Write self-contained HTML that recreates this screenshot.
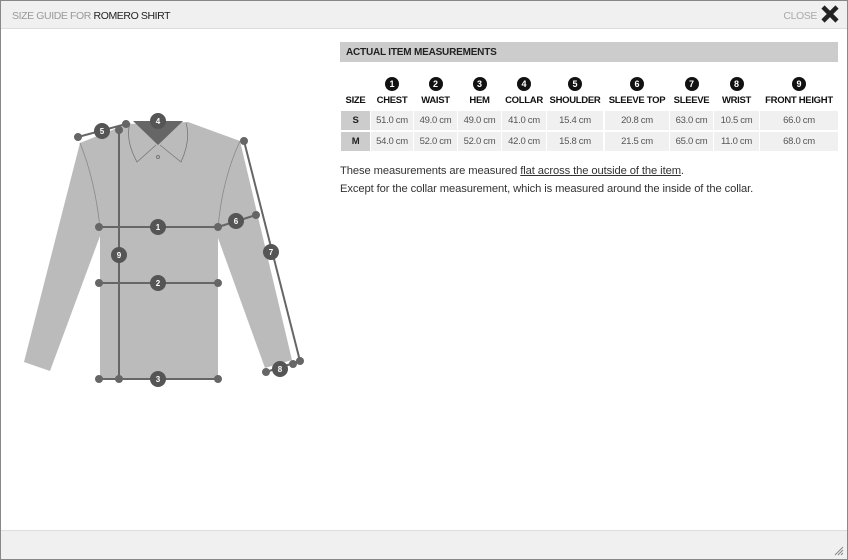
<!DOCTYPE html>
<html><head><meta charset="utf-8"><style>
*{margin:0;padding:0;box-sizing:border-box}
body{width:848px;height:560px;position:relative;background:#fff;font-family:"Liberation Sans",sans-serif;overflow:hidden}
.frame{position:absolute;left:0;top:0;width:848px;height:560px;border:1px solid #888}
.hdr{position:absolute;left:1px;top:1px;width:846px;height:28px;background:#f0f0f0;border-bottom:1px solid #ddd}
.hdr .t{position:absolute;left:11px;top:9px;font-size:10.5px;color:#999;letter-spacing:-0.4px}
.hdr .t b{color:#222;font-weight:normal}
.hdr .cl{position:absolute;right:30px;top:9px;font-size:10.5px;color:#aaa;letter-spacing:-0.4px}
.ftr{position:absolute;left:1px;top:530px;width:846px;height:29px;background:#f0f0f0;border-top:1px solid #ddd}
.bar{position:absolute;left:340px;top:42px;width:498px;height:20px;background:#ccc;font-size:10px;font-weight:bold;color:#222;padding:5px 0 0 6px;letter-spacing:-0.2px}
.c{position:absolute;text-align:center;font-size:9.5px;color:#333;letter-spacing:-0.3px}
.h{font-weight:bold;color:#111;top:95px;height:12px}
.n{position:absolute;top:77px;width:14px;height:14px;border-radius:50%;background:#111;color:#fff;font-size:9px;font-weight:bold;text-align:center;line-height:14px}
.d{background:#f0f0f0;height:19px;line-height:19px;color:#555}
.s{background:#ccc;font-weight:bold;color:#222}
p{position:absolute;left:340px;font-size:11.2px;color:#333;letter-spacing:-0.1px}
</style></head><body>
<div class="frame"></div>
<div class="hdr"><div class="t">SIZE GUIDE FOR <b>ROMERO SHIRT</b></div><div class="cl">CLOSE</div>
<svg style="position:absolute;right:8px;top:4px" width="18" height="18" viewBox="0 0 18 18"><path d="M2 2L16 16M16 2L2 16" stroke="#222" stroke-width="4.5"/></svg></div>
<div class="ftr"><svg style="position:absolute;right:3px;bottom:3px" width="10" height="10"><path d="M9 1L1 9M9 4L4 9M9 7L7 9" stroke="#888" stroke-width="1"/></svg></div>

<div class="bar">ACTUAL ITEM MEASUREMENTS</div>
<div id="tbl"></div>
<p style="top:165px">These measurements are measured <u>flat across the outside of the item</u>.</p>
<p style="top:183px">Except for the collar measurement, which is measured around the inside of the collar.</p>

<svg style="position:absolute;left:0;top:0" width="330" height="400">
<path d="M80 143 L127 124 L188 122 L240 141 L292 360 L265 368 L218 238 L218 380 L100 380 L100 236 L50 371 L24 362 Z" fill="#bbb"/>
<path d="M80 143 Q95 180 100 228 M240 141 Q222 180 218 228" stroke="#888" fill="none" stroke-width="0.8"/>
<path d="M133 121 L183 121 L158 145 Z" fill="#666"/>
<path d="M130 123 Q125 140 137 162 L156 145 M186 123 Q191 140 181 162 L160 145" stroke="#777" fill="none" stroke-width="0.8"/>
<circle cx="158" cy="157" r="1.5" fill="none" stroke="#777"/>
<g stroke="#666" stroke-width="2" fill="#666">
<line x1="99" y1="227" x2="218" y2="227"/><line x1="99" y1="283" x2="218" y2="283"/><line x1="99" y1="379" x2="218" y2="379"/>
<line x1="119" y1="130" x2="119" y2="379"/>
<line x1="78" y1="137" x2="126" y2="124"/><line x1="218" y1="227" x2="256" y2="215"/>
<line x1="244" y1="141" x2="300" y2="361"/><line x1="266" y1="372" x2="300" y2="361"/>
<circle cx="99" cy="227" r="3"/><circle cx="218" cy="227" r="3"/><circle cx="99" cy="283" r="3"/><circle cx="218" cy="283" r="3"/>
<circle cx="99" cy="379" r="3"/><circle cx="218" cy="379" r="3"/><circle cx="119" cy="379" r="3"/><circle cx="119" cy="130" r="3"/>
<circle cx="78" cy="137" r="3"/><circle cx="126" cy="124" r="3"/><circle cx="256" cy="215" r="3"/>
<circle cx="244" cy="141" r="3"/><circle cx="300" cy="361" r="3"/><circle cx="266" cy="372" r="3"/><circle cx="293" cy="364" r="3"/>
</g>
<g fill="#555" stroke="none">
<circle cx="158" cy="227" r="8"/><circle cx="158" cy="283" r="8"/><circle cx="158" cy="379" r="8"/><circle cx="158" cy="121" r="8"/>
<circle cx="102" cy="131" r="8"/><circle cx="236" cy="221" r="8"/><circle cx="271" cy="252" r="8"/><circle cx="280" cy="369" r="8"/><circle cx="119" cy="255" r="8"/>
</g>
<g fill="#fff" font-size="8" font-weight="bold" text-anchor="middle" font-family="Liberation Sans">
<text x="158" y="230">1</text><text x="158" y="286">2</text><text x="158" y="382">3</text><text x="158" y="124">4</text>
<text x="102" y="134">5</text><text x="236" y="224">6</text><text x="271" y="255">7</text><text x="280" y="372">8</text><text x="119" y="258">9</text>
</g>
</svg>
<script>
var cols=[[341,370,"SIZE"],[371,413,"CHEST"],[414,457,"WAIST"],[458,501,"HEM"],[502,546,"COLLAR"],[547,603,"SHOULDER"],[605,669,"SLEEVE TOP"],[670,713,"SLEEVE"],[714,759,"WRIST"],[760,838,"FRONT HEIGHT"]];
var S=["S","51.0 cm","49.0 cm","49.0 cm","41.0 cm","15.4 cm","20.8 cm","63.0 cm","10.5 cm","66.0 cm"];
var M=["M","54.0 cm","52.0 cm","52.0 cm","42.0 cm","15.8 cm","21.5 cm","65.0 cm","11.0 cm","68.0 cm"];
var h="";
cols.forEach(function(c,i){var w=c[1]-c[0];
h+='<div class="c h" style="left:'+c[0]+'px;width:'+w+'px">'+c[2]+'</div>';
if(i>0)h+='<div class="n" style="left:'+(c[0]+w/2-7)+'px">'+i+'</div>';
h+='<div class="c d'+(i==0?' s':'')+'" style="left:'+c[0]+'px;width:'+w+'px;top:111px">'+S[i]+'</div>';
h+='<div class="c d'+(i==0?' s':'')+'" style="left:'+c[0]+'px;width:'+w+'px;top:132px">'+M[i]+'</div>';});
document.getElementById('tbl').innerHTML=h;
</script>
</body></html>
